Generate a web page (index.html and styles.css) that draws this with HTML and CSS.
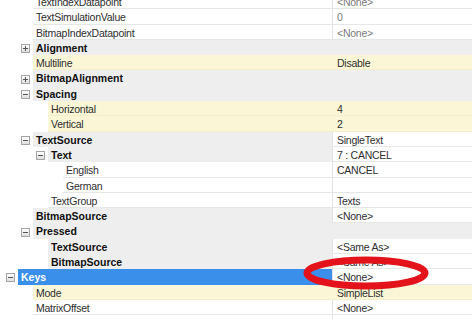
FILE: index.html
```html
<html>
<head>
  <meta http-equiv="Content-Type" content="text/html; charset=utf8">
  <title>Properties</title>
  <link rel="stylesheet" href="styles.css">
</head>
<body>
  <div class="grid">
    <div class="row"><div class="name l1"><span class="slot"></span><span class="label">TextIndexDatapoint</span></div><div class="value dim">&lt;None&gt;</div></div>
    <div class="row"><div class="name l1"><span class="slot"></span><span class="label">TextSimulationValue</span></div><div class="value dim">0</div></div>
    <div class="row"><div class="name l1"><span class="slot"></span><span class="label">BitmapIndexDatapoint</span></div><div class="value dim">&lt;None&gt;</div></div>
    <div class="row cat"><div class="name l1"><span class="slot"><i class="exp plus"></i></span><span class="label">Alignment</span></div><div class="value"></div></div>
    <div class="row hi"><div class="name l1"><span class="slot"></span><span class="label">Multiline</span></div><div class="value">Disable</div></div>
    <div class="row cat"><div class="name l1"><span class="slot"><i class="exp plus"></i></span><span class="label">BitmapAlignment</span></div><div class="value"></div></div>
    <div class="row cat"><div class="name l1"><span class="slot"><i class="exp"></i></span><span class="label">Spacing</span></div><div class="value"></div></div>
    <div class="row hi"><div class="name l2"><span class="slot"></span><span class="label">Horizontal</span></div><div class="value">4</div></div>
    <div class="row hi"><div class="name l2"><span class="slot"></span><span class="label">Vertical</span></div><div class="value">2</div></div>
    <div class="row cat has_value"><div class="name l1"><span class="slot"><i class="exp"></i></span><span class="label">TextSource</span></div><div class="value">SingleText</div></div>
    <div class="row cat has_value"><div class="name l2"><span class="slot"><i class="exp"></i></span><span class="label">Text</span></div><div class="value">7 : CANCEL</div></div>
    <div class="row"><div class="name l3"><span class="slot"></span><span class="label">English</span></div><div class="value">CANCEL</div></div>
    <div class="row"><div class="name l3"><span class="slot"></span><span class="label">German</span></div><div class="value"></div></div>
    <div class="row"><div class="name l2"><span class="slot"></span><span class="label">TextGroup</span></div><div class="value">Texts</div></div>
    <div class="row cat has_value"><div class="name l1"><span class="slot"></span><span class="label">BitmapSource</span></div><div class="value">&lt;None&gt;</div></div>
    <div class="row cat"><div class="name l1"><span class="slot"><i class="exp"></i></span><span class="label">Pressed</span></div><div class="value"></div></div>
    <div class="row cat has_value"><div class="name l2"><span class="slot"></span><span class="label">TextSource</span></div><div class="value">&lt;Same As&gt;</div></div>
    <div class="row cat has_value"><div class="name l2"><span class="slot"></span><span class="label">BitmapSource</span></div><div class="value">&lt;Same As&gt;</div></div>
    <div class="row cat has_value selected"><div class="name l0"><span class="slot"><i class="exp"></i></span><span class="label">Keys</span></div><div class="value">&lt;None&gt;</div></div>
    <div class="row hi"><div class="name l1"><span class="slot"></span><span class="label">Mode</span></div><div class="value">SimpleList</div></div>
    <div class="row"><div class="name l1"><span class="slot"></span><span class="label">MatrixOffset</span></div><div class="value">&lt;None&gt;</div></div>
    <div class="row"><div class="name l1"><span class="slot"></span><span class="label"></span></div><div class="value"></div></div>

    <svg class="mark" width="130" height="38" viewBox="0 0 130 38">
      <ellipse cx="64" cy="18" rx="59" ry="13" fill="none" stroke="#e3121b" stroke-width="7"/>
    </svg>
  </div>
</body>
</html>
```

FILE: styles.css
```css
body {
  margin: 0;
  background-color: #ffffff;
  font-family: "Liberation Sans", Arial, sans-serif;
  font-size: 10.5px;
  letter-spacing: -0.25px;
  color: #333333;
}
.grid {
  position: relative;
  width: 472px;
  margin-top: -6px;
}
.row {
  display: flex;
  height: 15.3px;
}
.name {
  display: flex;
  box-sizing: border-box;
  width: 332px;
  flex: none;
}
.l0 { padding-left: 3px; }
.l1 { padding-left: 18px; }
.l2 { padding-left: 33px; }
.l3 { padding-left: 48px; }
.slot {
  display: flex;
  align-items: center;
  width: 15px;
  flex: none;
  padding-top: 2px;
  box-sizing: border-box;
}
.label,
.value {
  box-sizing: border-box;
  height: 100%;
  padding-top: 1px;
  line-height: 14.3px;
  border-bottom: 1px solid #e6e6e6;
  white-space: nowrap;
  overflow: hidden;
}
.label {
  flex: 1;
  padding-left: 3px;
  color: #2e2e2e;
}
.value {
  flex: 1;
  padding-left: 4px;
  border-left: 1px solid #e2e2e2;
  color: #2e2e2e;
}
.value.dim {
  color: #7a7a7a;
}
.cat .label {
  background-color: #eeeeee;
  border-bottom-color: #eeeeee;
  font-weight: bold;
  letter-spacing: 0;
  color: #111111;
}
.cat .value {
  background-color: #eeeeee;
  border-bottom-color: #eeeeee;
  border-left-color: #eeeeee;
}
.cat.has_value .value {
  background-color: #ffffff;
  border-bottom-color: #e6e6e6;
  border-left-color: #e2e2e2;
}
.hi .label,
.hi .value {
  background-color: #fbf7d6;
  border-bottom-color: #f3efcc;
}
.hi .value {
  border-left-color: #fbf7d6;
}
.selected .label {
  background-color: #3a8fea;
  border-bottom-color: #3a8fea;
  color: #ffffff;
}
.exp {
  position: relative;
  display: block;
  width: 7px;
  height: 7px;
  margin-left: 3px;
  border: 1px solid #a4a4a4;
  background: linear-gradient(#ffffff, #dedede);
}
.exp:before {
  content: "";
  position: absolute;
  left: 1px;
  top: 3px;
  width: 5px;
  height: 1px;
  background-color: #555555;
}
.plus:after {
  content: "";
  position: absolute;
  left: 3px;
  top: 1px;
  width: 1px;
  height: 5px;
  background-color: #555555;
}
.mark {
  position: absolute;
  left: 302px;
  top: 261px;
}
```
